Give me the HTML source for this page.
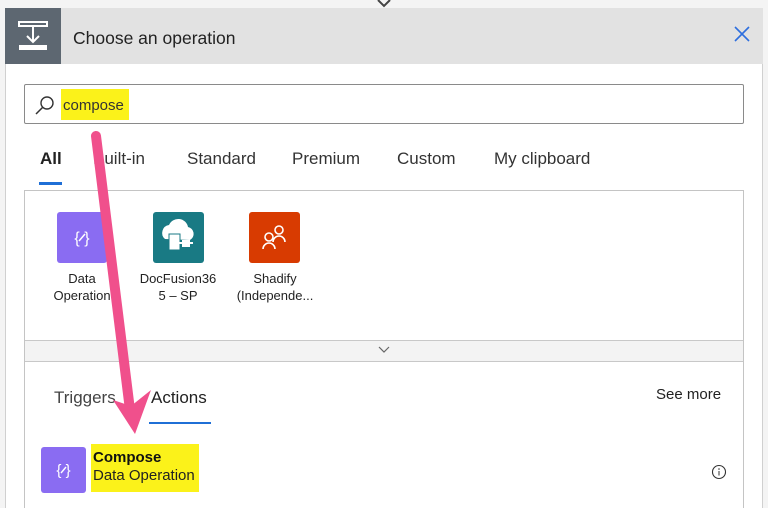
<!DOCTYPE html>
<html><head><meta charset="utf-8"><style>
*{margin:0;padding:0;box-sizing:border-box}
html{width:768px;height:508px;overflow:hidden}
body{width:768px;height:508px;overflow:hidden;background:#f4f4f4;font-family:"Liberation Sans",sans-serif;color:#222;position:relative}
.abs{position:absolute}
.t{position:absolute;white-space:nowrap}
</style></head><body>
<div class="abs" style="left:5px;top:8px;width:758px;height:500px;background:#fff;border-left:1px solid #d0d0d0;border-right:1px solid #d0d0d0"></div>
<div class="abs" style="left:5px;top:8px;width:758px;height:56px;background:#e2e2e2"></div>
<div class="abs" style="left:5px;top:8px;width:56px;height:56px;background:#5d6771"></div>
<svg class="abs" style="left:5px;top:8px" width="56" height="56"><rect x="14" y="14" width="28" height="4" fill="none" stroke="#fff" stroke-width="2"/><line x1="28" y1="18" x2="28" y2="34" stroke="#fff" stroke-width="2"/><polyline points="22,28 28,34 34,28" fill="none" stroke="#fff" stroke-width="2"/><rect x="14" y="37" width="28" height="5" fill="#fff"/></svg>
<div class="t" style="left:73px;top:28px;font-size:17.5px;color:#222">Choose an operation</div>
<svg class="abs" style="left:733px;top:25px" width="18" height="18"><path d="M2 2L16 16M16 2L2 16" stroke="#2f6fde" stroke-width="1.6"/></svg>
<svg class="abs" style="left:376px;top:0" width="16" height="8"><path d="M2 0L8 6L14 0" fill="none" stroke="#444" stroke-width="2"/></svg>
<div class="abs" style="left:24px;top:84px;width:720px;height:40px;border:1px solid #8a8a8a;border-radius:2px"></div>
<svg class="abs" style="left:34px;top:94px" width="22" height="22"><circle cx="13" cy="9" r="6" fill="none" stroke="#333" stroke-width="1.4"/><line x1="9" y1="13" x2="2" y2="20" stroke="#333" stroke-width="1.5"/></svg>
<div class="abs" style="left:61px;top:89px;width:68px;height:31px;background:#fbf21a"></div>
<div class="t" style="left:63px;top:97px;font-size:15px;color:#333">compose</div>
<div class="t" style="left:40px;top:149px;font-size:17px;font-weight:bold;color:#222">All</div>
<div class="t" style="left:93px;top:149px;font-size:17px;color:#333">Built-in</div>
<div class="t" style="left:187px;top:149px;font-size:17px;color:#333">Standard</div>
<div class="t" style="left:292px;top:149px;font-size:17px;color:#333">Premium</div>
<div class="t" style="left:397px;top:149px;font-size:17px;color:#333">Custom</div>
<div class="t" style="left:494px;top:149px;font-size:17px;color:#333">My clipboard</div>
<div class="abs" style="left:39px;top:182px;width:23px;height:3px;background:#1f6fd6"></div>
<div class="abs" style="left:24px;top:190px;width:720px;height:318px;border:1px solid #c4c4c4;border-bottom:none"></div>
<div class="abs" style="left:25px;top:340px;width:718px;height:22px;background:#f3f3f3;border-top:1px solid #c8c8c8;border-bottom:1px solid #c8c8c8"></div>
<svg class="abs" style="left:378px;top:346px" width="12" height="8"><path d="M1 1L6 6L11 1" fill="none" stroke="#666" stroke-width="1.2"/></svg>
<div class="abs" style="left:57px;top:212px;width:50px;height:51px;background:#8a6cf2;border-radius:3px"></div>
<svg class="abs" style="left:57px;top:212px" width="50" height="51"><text x="25" y="31" text-anchor="middle" font-family="Liberation Sans" font-size="16" fill="#fff">{ }</text><line x1="22" y1="29" x2="28" y2="22" stroke="#fff" stroke-width="1.5"/></svg>
<div class="abs" style="left:153px;top:212px;width:51px;height:51px;background:#197a84;border-radius:3px"></div>
<svg class="abs" style="left:153px;top:212px" width="51" height="51"><path d="M12 27a8 8 0 0 1 4-14a10 10 0 0 1 19 2a7 7 0 0 1 2 13z" fill="#fff"/><rect x="16" y="22" width="11" height="16" fill="#fff" stroke="#197a84"/><rect x="29" y="28" width="8" height="7" fill="#fff"/><line x1="23" y1="31" x2="40" y2="31" stroke="#fff" stroke-width="2"/></svg>
<div class="abs" style="left:249px;top:212px;width:51px;height:51px;background:#d83b01;border-radius:3px"></div>
<svg class="abs" style="left:249px;top:212px" width="51" height="51"><circle cx="30" cy="18" r="4" fill="none" stroke="#fff" stroke-width="1.6"/><path d="M24 30a6 6 0 0 1 12 0" fill="none" stroke="#fff" stroke-width="1.6"/><circle cx="20" cy="25" r="4" fill="none" stroke="#fff" stroke-width="1.6"/><path d="M14 37a6 6 0 0 1 12 0" fill="none" stroke="#fff" stroke-width="1.6"/></svg>
<div class="t" style="left:52px;top:270px;width:60px;text-align:center;font-size:13px;line-height:17px">Data<br>Operation</div>
<div class="t" style="left:136px;top:270px;width:84px;text-align:center;font-size:13px;line-height:17px">DocFusion36<br>5 – SP</div>
<div class="t" style="left:228px;top:270px;width:94px;text-align:center;font-size:13px;line-height:17px">Shadify<br>(Independe...</div>
<div class="t" style="left:54px;top:388px;font-size:17px;color:#444">Triggers</div>
<div class="t" style="left:151px;top:388px;font-size:17px;color:#222">Actions</div>
<div class="abs" style="left:149px;top:422px;width:62px;height:2px;background:#1f6fd6"></div>
<div class="t" style="left:656px;top:386px;font-size:15px;color:#222">See more</div>
<div class="abs" style="left:41px;top:447px;width:45px;height:46px;background:#8a6cf2;border-radius:3px"></div>
<svg class="abs" style="left:41px;top:447px" width="45" height="46"><text x="22.5" y="28" text-anchor="middle" font-family="Liberation Sans" font-size="15" fill="#fff">{ }</text><line x1="20" y1="26" x2="25" y2="20" stroke="#fff" stroke-width="1.4"/></svg>
<div class="abs" style="left:91px;top:444px;width:108px;height:48px;background:#fbf21a"></div>
<div class="t" style="left:93px;top:449px;font-size:15px;font-weight:bold;color:#111">Compose</div>
<div class="t" style="left:93px;top:467px;font-size:15px;color:#222">Data Operation</div>
<svg class="abs" style="left:711px;top:464px" width="16" height="16"><circle cx="8" cy="8" r="6.5" fill="none" stroke="#333" stroke-width="1.1"/><line x1="8" y1="7" x2="8" y2="11.5" stroke="#333"/><circle cx="8" cy="5" r=".8" fill="#333"/></svg>
<svg class="abs" style="left:0;top:0" width="768" height="508"><path d="M96 136L130 410" stroke="#f0508c" stroke-width="10" stroke-linecap="round"/><path d="M113 400L135 434L151 390L131 406Z" fill="#f0508c"/></svg>
</body></html>
